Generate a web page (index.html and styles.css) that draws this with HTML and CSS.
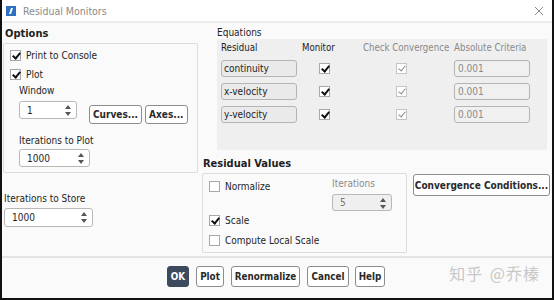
FILE: index.html
```html
<!DOCTYPE html>
<html>
<head>
<meta charset="utf-8">
<link rel="stylesheet" href="styles.css">
</head>
<body>
<div class="window">
  <div class="titlebar">
    <span class="appicon"><svg width="10" height="10" viewBox="0 0 10 10"><rect width="10" height="10" fill="#2f6fc1"/><path d="M3 8 L5 2 L7 2 L5 8 Z" fill="#fff"/></svg></span>
    <span class="title">Residual Monitors</span>
    <span class="close"><svg width="10" height="10" viewBox="0 0 10 10"><path d="M1 1 L9 9 M9 1 L1 9" stroke="#888" stroke-width="1"/></svg></span>
  </div>
  <div class="content">
    <div class="main">
      <div class="leftcol">
        <div class="group-title">Options</div>
        <div class="box options">
          <label class="cb"><span class="check on"></span>Print to Console</label>
          <label class="cb"><span class="check on"></span>Plot</label>
          <div class="indent">
            <div class="lbl">Window</div>
            <div class="winrow">
              <div class="spin w58"><span>1</span><i class="arrows"></i></div>
              <div class="btn">Curves...</div>
              <div class="btn">Axes...</div>
            </div>
            <div class="lbl mt">Iterations to Plot</div>
            <div class="spin w71"><span>1000</span><i class="arrows"></i></div>
          </div>
        </div>
        <div class="lbl store">Iterations to Store</div>
        <div class="spin w89"><span>1000</span><i class="arrows"></i></div>
      </div>
      <div class="rightcol">
        <div class="eqtitle">Equations</div>
        <div class="eqpanel">
          <div class="eqgrid">
            <div class="h">Residual</div><div class="h">Monitor</div><div class="h dis">Check Convergence</div><div class="h dis">Absolute Criteria</div>
            <div class="field">continuity</div><div class="c"><span class="check on"></span></div><div class="c"><span class="check on dim"></span></div><div class="field dis">0.001</div>
            <div class="field">x-velocity</div><div class="c"><span class="check on"></span></div><div class="c"><span class="check on dim"></span></div><div class="field dis">0.001</div>
            <div class="field">y-velocity</div><div class="c"><span class="check on"></span></div><div class="c"><span class="check on dim"></span></div><div class="field dis">0.001</div>
          </div>
        </div>
        <div class="resrow">
          <div class="rescol">
            <div class="group-title">Residual Values</div>
            <div class="box resbox">
              <div class="normrow">
                <label class="cb"><span class="check"></span>Normalize</label>
                <div class="itcol">
                  <div class="lbl dis">Iterations</div>
                  <div class="spin w60 disabled"><span>5</span><i class="arrows"></i></div>
                </div>
              </div>
              <label class="cb"><span class="check on"></span>Scale</label>
              <label class="cb"><span class="check"></span>Compute Local Scale</label>
            </div>
          </div>
          <div class="btn conv">Convergence Conditions...</div>
        </div>
      </div>
    </div>
    <div class="footer">
      <div class="btn primary b-ok">OK</div>
      <div class="btn b-plot">Plot</div>
      <div class="btn b-ren">Renormalize</div>
      <div class="btn b-can">Cancel</div>
      <div class="btn b-help">Help</div>
      <div class="watermark">知乎 @乔榛</div>
    </div>
  </div>
</div>
</body>
</html>
```
FILE: styles.css
```css
* { box-sizing: border-box; }
html, body { margin: 0; padding: 0; background: #fff; }
body { font-family: "DejaVu Sans Condensed", "DejaVu Sans", "Noto Sans CJK SC", sans-serif; font-size: 10px; color: #1e1e1e; }
.window { width: 554px; height: 300px; border-left: 2px solid #111; border-right: 2px solid #111; border-bottom: 2px solid #111; display: flex; flex-direction: column; background: #fafafa; position: relative; }
.titlebar { height: 23px; background: #fff; display: flex; align-items: center; padding-left: 4px; border-bottom: 2px solid #ececec; }
.appicon { width: 10px; height: 10px; display: flex; }
.title { margin-left: 7px; color: #8a8a8a; font-size: 10.5px; }
.close { margin-left: auto; margin-right: 8px; display: flex; }
.content { flex: 1; display: flex; flex-direction: column; }
.main { display: flex; flex: 1; }
.leftcol { width: 199px; padding-left: 1px; padding-top: 4px; display: flex; flex-direction: column; }
.group-title { font-weight: bold; font-size: 11px; height: 14px; line-height: 14px; padding-left: 2px; }
.box { border: 1px solid #dcdcdc; border-radius: 2px; background: #fafafa; }
.options { margin-top: 2px; height: 130px; width: 195px; padding: 2px 0 0 6px; }
.cb { display: flex; align-items: center; height: 19px; gap: 5px; }
.check { width: 11px; height: 11px; border: 1px solid #a8a8a8; background: #fff; display: inline-block; position: relative; flex: none; }
.check.on::after { content: ""; position: absolute; left: 3px; top: 0px; width: 3px; height: 6px; border: solid #111; border-width: 0 2px 2px 0; transform: rotate(40deg); }
.check.dim { border-color: #c4c4c4; }
.check.dim::after { border-color: #8a8a8a; border-width: 0 1.5px 1.5px 0; }
.indent { padding-left: 9px; }
.lbl { height: 14px; line-height: 14px; }
.lbl.mt { margin-top: 10px; }
.dis { color: #8a8a8a; }
.winrow { display: flex; align-items: flex-start; gap: 3px; margin-top: 3px; }
.spin { height: 18px; border: 1px solid #b8b8b8; border-radius: 3px; background: #fff; display: flex; align-items: center; padding-left: 7px; position: relative; margin-top: 1px; flex: none; }
.winrow .spin { margin-top: 0; margin-right: 9px; }
.spin.disabled { background: #efefef; color: #777; }
.w58 { width: 58px; }
.w71 { width: 71px; }
.w89 { width: 89px; }
.w60 { width: 60px; }
.arrows { position: absolute; right: 4px; top: 3px; width: 7px; height: 11px; }
.arrows::before, .arrows::after { content: ""; position: absolute; left: 0; border-left: 3.5px solid transparent; border-right: 3.5px solid transparent; }
.arrows::before { top: 0; border-bottom: 4px solid #555; }
.arrows::after { bottom: 0; border-top: 4px solid #555; }
.btn { height: 20px; border: 1px solid #8c8c8c; border-radius: 3px; background: #fff; font-weight: bold; padding: 0 3px; display: flex; align-items: center; justify-content: center; color: #2a2a2a; white-space: nowrap; }
.winrow .btn { margin-top: 4px; height: 19px; }
.store { margin-top: 19px; padding-left: 1px; }
.leftcol > .spin { margin-top: 2px; margin-left: 1px; height: 19px; }
.rightcol { flex: 1; padding-top: 4px; display: flex; flex-direction: column; }
.eqtitle { margin-left: 16px; height: 12px; line-height: 12px; }
.eqpanel { margin-left: 16px; width: 330px; height: 111px; background: #efefef; padding: 0 0 0 4px; }
.eqgrid { display: grid; grid-template-columns: 81px 61px 91px 76px; grid-template-rows: 18px repeat(3, 23px); align-items: center; }
.eqgrid .h { height: 16px; line-height: 16px; font-size: 9.6px; }
.field { height: 17px; width: 76px; border: 1px solid #b5b5b5; border-radius: 3px; background: #eaeaea; padding-left: 2px; line-height: 15px; }
.field.dis { background: #f0f0f0; padding-left: 3px; }
.c { display: flex; padding-left: 17px; }
.eqgrid .c:nth-child(4n+3) { padding-left: 33px; }
.resrow { display: flex; margin-top: 6px; }
.rescol { display: flex; flex-direction: column; margin-left: 1px; }
.rescol .group-title { padding-left: 1px; height: 16px; line-height: 16px; }
.resbox { margin-top: 1px; width: 205px; height: 80px; padding: 2px 0 0 6px; }
.resbox .cb { height: 20px; }
.normrow { display: flex; justify-content: space-between; height: 34px; }
.itcol { display: flex; flex-direction: column; margin-right: 14px; margin-top: 1px; }
.itcol .spin { margin-top: 3px; height: 17px; }
.conv { margin-left: 6px; margin-top: 18px; height: 22px; width: 137px; font-size: 10px; }
.footer { height: 42px; border-top: 2px solid #e4e4e4; display: flex; align-items: center; gap: 7px; padding-left: 165px; padding-bottom: 4px; position: relative; }
.footer .btn { height: 21px; padding: 0; font-size: 9.8px; }
.b-ok { width: 22px; }
.b-plot { width: 28px; }
.b-ren { width: 69px; }
.b-can { width: 42px; margin-right: -1px; }
.b-help { width: 30px; }
.btn.primary { background: #3d4a5e; color: #fff; border-color: #3d4a5e; }
.watermark { position: absolute; right: 12px; top: 3px; font-family: "Noto Sans CJK SC", sans-serif; font-size: 16px; letter-spacing: 1px; word-spacing: 2px; color: #c8c8c8; }
```
